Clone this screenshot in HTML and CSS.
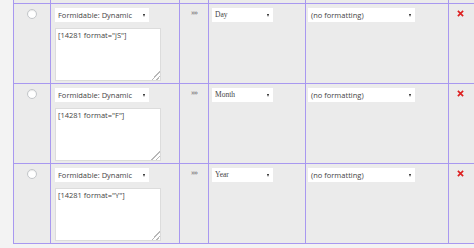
FILE: index.html
```html
<!DOCTYPE html>
<html>
<head>
<meta charset="utf-8">
<link rel="stylesheet" href="styles.css">
</head>
<body>
<div class="grid">
  <div class="cell"></div><div class="cell"></div><div class="cell"></div><div class="cell"></div><div class="cell"></div><div class="cell"></div>

  <div class="cell c-radio"><span class="radio"></span></div>
  <div class="cell c-source">
    <div class="select w-source"><span>Formidable: Dynamic</span><i class="caret"></i></div>
    <textarea class="code">[14281 format="jS"]</textarea>
  </div>
  <div class="cell c-arrow">»»</div>
  <div class="cell c-unit"><div class="select serif w-unit"><span>Day</span><i class="caret"></i></div></div>
  <div class="cell c-format"><div class="select w-format"><span>(no formatting)</span><i class="caret"></i></div></div>
  <div class="cell c-del"><svg class="del" viewBox="0 0 8 8" width="7" height="7"><path d="M1 1L7 7M7 1L1 7"/></svg></div>

  <div class="cell c-radio"><span class="radio"></span></div>
  <div class="cell c-source">
    <div class="select w-source"><span>Formidable: Dynamic</span><i class="caret"></i></div>
    <textarea class="code">[14281 format="F"]</textarea>
  </div>
  <div class="cell c-arrow">»»</div>
  <div class="cell c-unit"><div class="select serif w-unit"><span>Month</span><i class="caret"></i></div></div>
  <div class="cell c-format"><div class="select w-format"><span>(no formatting)</span><i class="caret"></i></div></div>
  <div class="cell c-del"><svg class="del" viewBox="0 0 8 8" width="7" height="7"><path d="M1 1L7 7M7 1L1 7"/></svg></div>

  <div class="cell c-radio"><span class="radio"></span></div>
  <div class="cell c-source">
    <div class="select w-source"><span>Formidable: Dynamic</span><i class="caret"></i></div>
    <textarea class="code">[14281 format="Y"]</textarea>
  </div>
  <div class="cell c-arrow">»»</div>
  <div class="cell c-unit"><div class="select serif w-unit"><span>Year</span><i class="caret"></i></div></div>
  <div class="cell c-format"><div class="select w-format"><span>(no formatting)</span><i class="caret"></i></div></div>
  <div class="cell c-del"><svg class="del" viewBox="0 0 8 8" width="7" height="7"><path d="M1 1L7 7M7 1L1 7"/></svg></div>
</div>
</body>
</html>
```

FILE: styles.css
```css
html, body {
  margin: 0;
  padding: 0;
  background: #f3f3f3;
  overflow: hidden;
  width: 474px;
  height: 248px;
}

.grid {
  display: grid;
  grid-template-columns: 36px 128px 28px 96px 142px 40px;
  grid-template-rows: 3px 79px 79px 79px;
  gap: 1px;
  background: #a898f0;
  border-left: 1px solid #a898f0;
  border-bottom: 1px solid #a898f0;
  margin-left: 13px;
  width: max-content;
  font-family: "Open Sans", "Noto Sans", sans-serif;
  font-size: 7.5px;
  color: #444;
}

.cell {
  background: #ebebeb;
  box-sizing: border-box;
}

.c-radio {
  display: flex;
  justify-content: center;
  padding-top: 5px;
}

.radio {
  width: 10px;
  height: 10px;
  box-sizing: border-box;
  border-radius: 50%;
  border: 1px solid #c3c6c9;
  background: #fff;
  box-shadow: inset 0 1px 1px rgba(0,0,0,0.08);
}

.c-source {
  padding: 4px 0 0 4px;
  display: flex;
  flex-direction: column;
  align-items: flex-start;
}

.select {
  height: 14px;
  background: #fff;
  display: flex;
  align-items: center;
  justify-content: space-between;
  padding: 0 4px 0 3px;
  box-sizing: border-box;
  line-height: 14px;
  color: #444;
  white-space: nowrap;
}

.select.serif {
  font-family: "Liberation Serif", "DejaVu Serif", serif;
  font-size: 7.5px;
  padding-left: 3px;
}

.caret {
  width: 0;
  height: 0;
  border-left: 1.5px solid transparent;
  border-right: 1.5px solid transparent;
  border-top: 3px solid #222;
}

.w-source { width: 94px; }
.w-unit { width: 61px; }
.w-format { width: 107px; }

.code {
  margin: 6px 0 0 0;
  width: 106px;
  height: 53px;
  box-sizing: border-box;
  border: 1px solid #dcdcdc;
  background: #fff;
  font-family: "Open Sans", "Noto Sans", sans-serif;
  font-size: 7.5px;
  line-height: 11px;
  color: #444;
  padding: 1px 2px;
  outline: none;
}

.code::-webkit-resizer {
  background: linear-gradient(135deg,
    transparent 0 70%, #b8b8b8 70% 76%, transparent 76% 84%,
    #b8b8b8 84% 90%, transparent 90%);
}

.c-arrow {
  text-align: center;
  font-family: "Open Sans", sans-serif;
  font-size: 8px;
  line-height: 10px;
  color: #666;
  padding-top: 3px;
  letter-spacing: -1px;
}

.c-unit {
  padding: 4px 0 0 3px;
}

.c-format {
  padding: 4px 0 0 2px;
}

.c-del {
  padding: 6px 0 0 8px;
}

.del {
  display: block;
  stroke: #dd2020;
  stroke-width: 1.9;
  fill: none;
}
```
